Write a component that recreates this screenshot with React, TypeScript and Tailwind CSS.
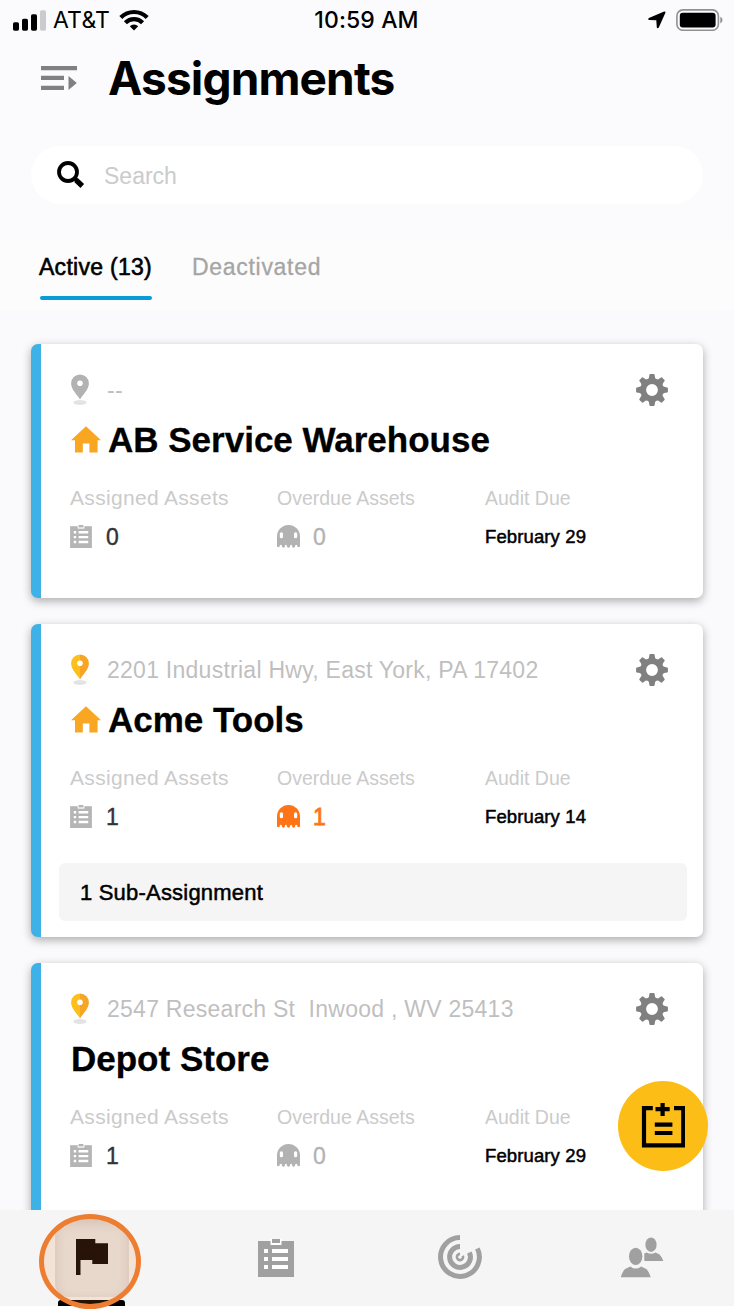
import type { ReactNode } from "react";

interface Assignment {
  name: string;
  address: string;
  located: boolean;
  home: boolean;
  assigned: number;
  overdue: number;
  auditDue: string;
  subAssignments?: string;
}

const ASSIGNMENTS: Assignment[] = [
  {
    name: "AB Service Warehouse",
    address: "--",
    located: false,
    home: true,
    assigned: 0,
    overdue: 0,
    auditDue: "February 29",
  },
  {
    name: "Acme Tools",
    address: "2201 Industrial Hwy, East York, PA 17402",
    located: true,
    home: true,
    assigned: 1,
    overdue: 1,
    auditDue: "February 14",
    subAssignments: "1 Sub-Assignment",
  },
  {
    name: "Depot Store",
    address: "2547 Research St  Inwood , WV 25413",
    located: true,
    home: false,
    assigned: 1,
    overdue: 0,
    auditDue: "February 29",
  },
];

function SignalIcon() {
  return (
    <svg width="33" height="21" viewBox="0 0 33 21">
      <rect x="0" y="12.3" width="6" height="8.4" rx="1.6" />
      <rect x="9" y="8.8" width="6" height="11.9" rx="1.6" />
      <rect x="18" y="4.3" width="6" height="16.4" rx="1.6" />
      <rect x="27" y="0.3" width="6" height="20.4" rx="1.6" fill="#cbcbcd" />
    </svg>
  );
}

function WifiIcon() {
  return (
    <svg width="30" height="22" viewBox="0 0 30 22" fill="none" stroke="#000" strokeWidth="4.2">
      <path d="M1.8 8.4a18.8 18.8 0 0 1 26.4 0" />
      <path d="M6.4 13.8a12 12 0 0 1 17.2 0" />
      <path d="M15 21.5l-4.2-4.2a6 6 0 0 1 8.4 0z" fill="#000" stroke="none" />
    </svg>
  );
}

function BatteryIcon() {
  return (
    <svg width="47" height="22" viewBox="0 0 47 22">
      <rect x="0.9" y="0.9" width="41.5" height="20.4" rx="6" fill="none" stroke="#919193" strokeWidth="1.6" />
      <rect x="3.8" y="3.8" width="35.8" height="14.6" rx="3" />
      <path d="M44.3 7.8q2.2.8 2.2 3.3t-2.2 3.3z" fill="#919193" />
    </svg>
  );
}

function MenuIcon() {
  return (
    <svg width="36" height="25" viewBox="0 0 36 25" fill="#808080">
      <path d="M0 0h36v4.3H0zM0 9.7h23V14H0zM0 19.7h23V24H0zM27.5 10l8.3 7-8.3 7z" />
    </svg>
  );
}

function SearchIcon() {
  return (
    <svg width="28" height="28" viewBox="0 0 28 28" fill="none" stroke="#000">
      <circle cx="11" cy="11" r="9" strokeWidth="3.8" />
      <path d="M17.5 17.5l2.5 2" strokeWidth="4" />
      <path d="M19 19l6.3 6" strokeWidth="5.2" />
    </svg>
  );
}

function PinIcon({ active }: { active: boolean }) {
  return (
    <svg width="20" height="32" viewBox="0 0 20 32">
      <ellipse cx="10" cy="28.5" rx="6.6" ry="2.5" fill="#e3e3e3" />
      <path
        d="M10 .4a8.9 8.9 0 0 0-8.9 8.9C1.1 15.5 6.5 20 10 25.4z"
        fill={active ? "#fdbf1c" : "#b2b2b2"}
      />
      <path
        d="M10 .4a8.9 8.9 0 0 1 8.9 8.9c0 6.2-5.4 10.7-8.9 16.1z"
        fill={active ? "#f7a524" : "#b2b2b2"}
      />
      <circle cx="10" cy="9.2" r="2.8" fill="#fff" />
    </svg>
  );
}

function HouseIcon() {
  return (
    <svg width="30" height="28" viewBox="0 0 30 28" fill="#f9a622">
      <path d="M15 .3L30 14.3h-3.4v12.2h-8.2v-9h-6.6v9H4V14.3H0z" />
    </svg>
  );
}

function GearIcon() {
  return (
    <svg width="32" height="32" viewBox="-16 -16 32 32">
      <circle r="8.8" fill="none" stroke="#808080" strokeWidth="5.8" />
      {[0, 45, 90, 135, 180, 225, 270, 315].map((angle) => (
        <path
          key={angle}
          d="M-4.2-10.3Q-2.8-11.8-2.6-15.2Q-2.4-15.9-1.8-15.9H1.8Q2.4-15.9 2.6-15.2Q2.8-11.8 4.2-10.3z"
          fill="#808080"
          transform={`rotate(${angle})`}
        />
      ))}
    </svg>
  );
}

function ClipboardIcon({ className, hole }: { className: string; hole: string }) {
  return (
    <svg className={className} viewBox="0 0 36 38" fill="currentColor">
      <path d="M0 2h36v36H0z" />
      <path d="M12.5 0h11v6h-11z" fill={hole} />
      <path d="M14 0h8v4h-8z" />
      <path
        d="M6 10h4v4H6zM14 10h16v4H14zM6 18h4v4H6zM14 18h16v4H14zM6 26h4v4H6zM14 26h16v4H14z"
        fill={hole}
      />
    </svg>
  );
}

function GhostIcon() {
  return (
    <svg width="23" height="23" viewBox="0 0 23 23" fill="currentColor">
      <path d="M0 11.5a11.5 11.5 0 0 1 23 0V21.5q-1.3 1.6-2.7 0V20.5q-1.1-1.6-2.2 0v1q-1.5 2.6-3 0v-1q-1-1.6-2 0v1q-1.6 2.6-3.2 0v-1q-1-1.6-2 0v1q-1.5 2.6-3 0v-1q-1.1-1.6-2.2 0v1q-1.4 1.6-2.7 0z" />
      <rect x="2.8" y="7.3" width="3.2" height="6" rx="1.5" fill="#fff" />
      <rect x="17" y="7.3" width="3.2" height="6" rx="1.5" fill="#fff" />
    </svg>
  );
}

function RadarIcon() {
  return (
    <svg width="44" height="44" viewBox="-22 -22 44 44" fill="none" stroke="#a0a0a0">
      <path d="M0-19.4A19.4 19.4 0 1 0 17.4-8.5" strokeWidth="5" />
      <path d="M0-10.4A10.4 10.4 0 1 0 9.4-4.5" strokeWidth="5" />
      <path d="M0-3.1A3.1 3.1 0 1 0 2.8-1.3" strokeWidth="2.6" />
    </svg>
  );
}

function PeopleIcon() {
  return (
    <svg width="44" height="42" viewBox="0 0 44 42" fill="#a0a0a0">
      <ellipse cx="31" cy="8.7" rx="5.6" ry="7.2" />
      <path d="M24.3 25v-7.6l2.3-1q4.4 2.6 8.8 0l3.9 1.8Q41.8 20.5 43.4 25z" />
      <ellipse cx="15.7" cy="20.3" rx="6.7" ry="8.6" />
      <path d="M.7 41.3q2-6.3 4.4-8.4l5.2-2.5q5.4 4.4 10.8 0l5.2 2.5q2.4 2.1 4.5 8.4z" />
    </svg>
  );
}

function Stat({ label, labelClass, children }: { label: string; labelClass: string; children: ReactNode }) {
  return (
    <div>
      <div className={`h-5 leading-5 whitespace-nowrap text-[#cbcbcb] ${labelClass}`}>{label}</div>
      <div className="mt-[17px] flex h-6 items-center">{children}</div>
    </div>
  );
}

function AssignmentCard({ item }: { item: Assignment }) {
  return (
    <article className="shrink-0 rounded-[7px] border-l-10 border-[#3eb2e6] bg-white shadow-[0_3px_10px_rgba(0,0,0,0.32)]">
      <div className="pt-[26px] pr-[35px] pl-[29px]">
        <div className="flex h-10 items-center">
          <PinIcon active={item.located} />
          <span className="ml-[17px] flex-1 pt-px text-[23px] tracking-[0.26px] whitespace-pre text-[#bfbfbf]">
            {item.address}
          </span>
          <GearIcon />
        </div>

        <div className="mt-[10px] flex h-10 items-center">
          {item.home ? (
            <span className="mr-[7px] ml-px">
              <HouseIcon />
            </span>
          ) : (
            <span className="w-px" />
          )}
          <h2 className="text-[35px] leading-10 font-bold whitespace-nowrap [-webkit-text-stroke:0.3px_#000]">
            {item.name}
          </h2>
        </div>

        <div className="mt-[28px] grid grid-cols-[207px_208px_1fr]">
          <Stat label="Assigned Assets" labelClass="text-[21px] tracking-[0.32px]">
            <ClipboardIcon className="mb-px h-[23px] w-[22px] text-[#b5b5b5]" hole="#fff" />
            <span className="ml-[14px] text-[23px] text-[#333] [-webkit-text-stroke:0.4px_#333]">
              {item.assigned}
            </span>
          </Stat>
          <Stat label="Overdue Assets" labelClass="text-[19.5px]">
            <span
              className={`flex items-center ${item.overdue > 0 ? "text-[#ff7417]" : "text-[#b2b2b2]"}`}
            >
              <span className="mb-px">
                <GhostIcon />
              </span>
              <span
                className={`ml-[13px] text-[23px] ${item.overdue > 0 ? "[-webkit-text-stroke:0.8px_#ff7417]" : "[-webkit-text-stroke:0.3px_#b2b2b2]"}`}
              >
                {item.overdue}
              </span>
            </span>
          </Stat>
          <Stat label="Audit Due" labelClass="text-[19.5px]">
            <span className="text-[18.5px] tracking-[0.12px] [-webkit-text-stroke:0.5px_#000]">
              {item.auditDue}
            </span>
          </Stat>
        </div>
      </div>

      {item.subAssignments ? (
        <div className="mt-[34px] mr-4 mb-4 ml-[18px] flex h-[58px] items-center rounded-md bg-[#f5f5f5] pl-[21px] text-[22px] tracking-[0.2px] [-webkit-text-stroke:0.5px_#000]">
          {item.subAssignments}
        </div>
      ) : (
        <div className="h-[49px]" />
      )}
    </article>
  );
}

function StatusBar() {
  return (
    <div className="grid h-10 grid-cols-3 items-center pr-[11px] pl-[13px] font-[Inter] text-[23px]">
      <div className="flex items-center">
        <SignalIcon />
        <span className="mr-[9px] ml-[7px] tracking-[0.2px]">AT&amp;T</span>
        <WifiIcon />
      </div>
      <div className="pr-[3px] text-center font-medium tracking-[0.1px]">10:59 AM</div>
      <div className="flex items-center justify-end gap-[10px]">
        <svg width="18" height="18" viewBox="0 0 18 18">
          <path d="M16.2.4q1.6-.2 1.2 1.4L10.8 16.6q-1.2 1.4-2 0L8.3 9.3 1.1 9q-1.6-.6-.2-1.9z" />
        </svg>
        <BatteryIcon />
      </div>
    </div>
  );
}

function BottomNav() {
  return (
    <nav className="relative flex h-[96px] shrink-0 items-start bg-[#f5f5f5]">
      <div className="flex h-full w-[183px] flex-col items-center justify-end">
        <div className="h-[6px] w-[67px] rounded-t-[3px] bg-black" />
      </div>
      <div className="flex w-[186px] justify-center pt-[29px]">
        <ClipboardIcon className="h-[38px] w-9 text-[#a0a0a0]" hole="#fff" />
      </div>
      <div className="flex w-[181px] justify-center pt-[25px]">
        <RadarIcon />
      </div>
      <div className="flex w-[184px] justify-center pt-[26px]">
        <PeopleIcon />
      </div>

      {/* Active tab highlight */}
      <div className="absolute top-1 left-[39px] flex h-[95px] w-[102px] justify-center overflow-hidden rounded-[50%] border-5 border-[#ed7d31] bg-[#ed7d31]/15">
        <div className="ml-[3px] flex h-[78px] w-[74px] justify-center rounded-b-[14px] bg-[#c0a89a]/20 pt-[20px] pl-px shadow-[inset_0_4px_12px_rgba(80,40,20,0.12)]">
          <svg width="32" height="36" viewBox="0 0 32 36" fill="#271308">
            <path d="M0 0h19.3v4.3H32V25H16.3v-4H4.5v15H0z" />
          </svg>
        </div>
      </div>
    </nav>
  );
}

export default function App() {
  return (
    <div className="flex h-[1309px] w-[734px] flex-col overflow-hidden bg-white font-['Liberation_Sans',Arial,sans-serif] text-black">
      <header className="h-[240px] shrink-0 bg-[#fbfbfd]">
        <StatusBar />
        <div className="flex h-[76px] items-center pl-[41px]">
          <MenuIcon />
          <h1 className="ml-[31px] font-[Inter] text-[46px] font-bold tracking-[-0.85px]">Assignments</h1>
        </div>
        <div className="mx-[31px] mt-[30px] flex h-[58px] items-center rounded-full bg-white pl-[26px]">
          <SearchIcon />
          <span className="ml-[19px] pt-[2px] text-[23px] text-[#cbcbcb]">Search</span>
        </div>
      </header>

      <div className="flex h-[70px] shrink-0 gap-10 bg-[#fcfcfc] pt-3 pl-[39px] text-[23px] leading-[31px]">
        <div className="w-[113px] whitespace-nowrap">
          <div className="tracking-[0.28px] [-webkit-text-stroke:0.6px_#000]">Active (13)</div>
          <div className="mt-[13px] ml-px h-1 rounded-full bg-[#0b9bd7]" />
        </div>
        <div className="tracking-[0.7px] text-[#a5a5a5] [-webkit-text-stroke:0.3px_#a5a5a5]">Deactivated</div>
      </div>

      <main className="relative min-h-0 flex-1 bg-[#fafafc]">
        <div className="flex h-full flex-col gap-[26px] overflow-hidden px-[31px] pt-[34px]">
          {ASSIGNMENTS.map((item) => (
            <AssignmentCard key={item.name} item={item} />
          ))}
        </div>

        <button className="absolute right-[26px] bottom-[39px] flex size-[90px] items-center justify-center rounded-full bg-[#fdbd17]">
          <svg width="44" height="46" viewBox="0 0 44 46">
            <path d="M11.8 5.1H3v37.2h39.3V5.1H33" fill="none" stroke="#000" strokeWidth="4.2" />
            <path d="M19.5-.5h4.2v4.6h5v4.2h-5v4.6h-4.2V8.3h-5V4.1h5zM13.8 19.5h17.6v4.2H13.8zM13.8 27.9h17.6v4.2H13.8z" />
          </svg>
        </button>
      </main>

      <BottomNav />
      <div className="h-[3px] shrink-0" />
    </div>
  );
}
